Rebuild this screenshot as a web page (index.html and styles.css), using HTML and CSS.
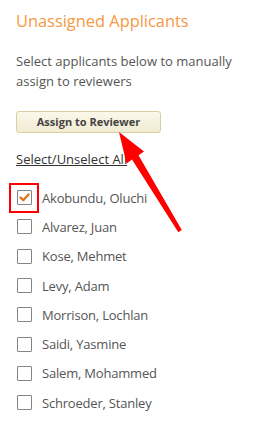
FILE: index.html
```html
<!DOCTYPE html>
<html>
<head>
<meta charset="utf-8">
<link rel="stylesheet" href="styles.css">
</head>
<body>
<div class="panel">
  <h2 class="title">Unassigned Applicants</h2>
  <p class="intro">Select applicants below to manually assign to reviewers</p>
  <button class="assign-btn">Assign to Reviewer</button>
  <a class="select-all" href="#">Select/Unselect All</a>
  <ul class="applicants">
    <li class="row">
      <span class="box checked"><svg viewBox="0 0 11 11" width="11" height="11"><path d="M1.5 5.5 L4.3 8.2 L9.5 2.5" fill="none" stroke="#e0761c" stroke-width="2.4" stroke-linecap="round" stroke-linejoin="round"/></svg></span>
      <span class="name">Akobundu, Oluchi</span>
      <span class="highlight"></span>
    </li>
    <li class="row"><span class="box"></span><span class="name">Alvarez, Juan</span></li>
    <li class="row"><span class="box"></span><span class="name">Kose, Mehmet</span></li>
    <li class="row"><span class="box"></span><span class="name">Levy, Adam</span></li>
    <li class="row"><span class="box"></span><span class="name">Morrison, Lochlan</span></li>
    <li class="row"><span class="box"></span><span class="name">Saidi, Yasmine</span></li>
    <li class="row"><span class="box"></span><span class="name">Salem, Mohammed</span></li>
    <li class="row"><span class="box"></span><span class="name">Schroeder, Stanley</span></li>
  </ul>
</div>
<svg class="arrow" width="265" height="434" viewBox="0 0 265 434">
  <polygon points="119,132 144,151.5 138.5,155.3 181.8,230 178.3,232.2 132,159.5 126.5,163.5" fill="#ff0000"/>
</svg>
</body>
</html>
```
FILE: styles.css
```css
html, body {
  margin: 0;
  padding: 0;
  background: #ffffff;
}
body {
  position: relative;
  width: 265px;
  height: 434px;
  overflow: hidden;
  font-family: "Open Sans", "DejaVu Sans", sans-serif;
  color: #555555;
}
.panel {
  padding: 9px 0 0 16px;
  display: flex;
  flex-direction: column;
  align-items: flex-start;
}
.title {
  margin: 0;
  font-size: 16.4px;
  line-height: 24px;
  font-weight: normal;
  color: #f6983f;
}
.intro {
  margin: 18px 0 0 0;
  width: 225px;
  font-size: 13px;
  line-height: 20px;
  color: #555555;
}
.assign-btn {
  margin-top: 20px;
  width: 145px;
  height: 22px;
  padding: 0;
  border: 1px solid #d8cfa4;
  border-radius: 3px;
  background: linear-gradient(#fbf8ea, #f1ebd2);
  font-family: "Open Sans", "DejaVu Sans", sans-serif;
  font-weight: bold;
  font-size: 11px;
  line-height: 20px;
  color: #444444;
}
.select-all {
  margin-top: 16px;
  font-size: 13px;
  line-height: 20px;
  color: #333333;
  text-decoration: underline;
}
.applicants {
  list-style: none;
  margin: 14px 0 0 0;
  padding: 0;
}
.row {
  position: relative;
  display: flex;
  align-items: center;
  height: 29.3px;
  font-size: 13px;
}
.box {
  box-sizing: border-box;
  width: 15px;
  height: 15px;
  margin-left: 1px;
  border: 1.7px solid #858585;
  border-radius: 1px;
  background: #ffffff;
  display: flex;
  align-items: center;
  justify-content: center;
}
.name {
  margin-left: 10px;
  letter-spacing: -0.2px;
  color: #555555;
}
.highlight {
  position: absolute;
  left: -7px;
  top: 0;
  width: 30px;
  height: 29.5px;
  box-sizing: border-box;
  border: 2.5px solid #ff0000;
}
.arrow {
  position: absolute;
  left: 0;
  top: 0;
  pointer-events: none;
}
```
